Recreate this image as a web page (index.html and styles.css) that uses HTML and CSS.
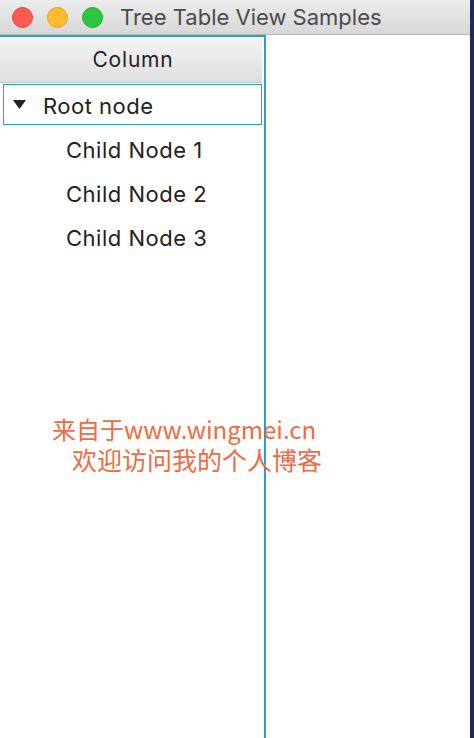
FILE: index.html
```html
<!DOCTYPE html>
<html lang="zh">
<head>
<meta charset="utf-8">
<title>Tree Table View Samples</title>
<link rel="stylesheet" href="styles.css">
</head>
<body>
<div class="window">
  <div class="titlebar">
    <div class="lights">
      <span class="light red"></span>
      <span class="light yellow"></span>
      <span class="light green"></span>
    </div>
    <div class="title">Tree Table View Samples</div>
  </div>
  <div class="content">
    <div class="table">
      <div class="header">Column</div>
      <div class="row root">
        <div class="focus">
          <svg class="arrow" width="13" height="9" viewBox="0 0 13 9"><polygon points="0,0 13,0 6.5,9" fill="#222"/></svg>
          <span class="label">Root node</span>
        </div>
      </div>
      <div class="row child"><span class="label">Child Node 1</span></div>
      <div class="row child"><span class="label">Child Node 2</span></div>
      <div class="row child"><span class="label">Child Node 3</span></div>
    </div>
    <div class="blank"></div>
  </div>
  <div class="watermark">
    <div class="wm1">来自于www.wingmei.cn</div>
    <div class="wm2">欢迎访问我的个人博客</div>
  </div>
</div>
</body>
</html>
```

FILE: styles.css
```css
html, body {
  margin: 0;
  padding: 0;
  height: 100%;
}
body {
  background: #1d2c54;
  font-family: Inter, "Noto Sans", sans-serif;
  overflow: hidden;
}
.window {
  position: relative;
  width: 470px;
  height: 738px;
  background: #ffffff;
  display: flex;
  flex-direction: column;
}
.titlebar {
  flex: none;
  display: flex;
  align-items: center;
  background: linear-gradient(#ececec, #d7d7d7);
  border-bottom: 1px solid #b8b8b8;
  box-sizing: border-box;
  height: 35px;
  padding-left: 12px;
}
.lights {
  display: flex;
  gap: 14px;
}
.light {
  width: 21px;
  height: 21px;
  border-radius: 50%;
  box-sizing: border-box;
}
.red { background: #fd5a56; border: 1px solid #e2463f; }
.yellow { background: #febb2e; border: 1px solid #e0a027; }
.green { background: #2ac83f; border: 1px solid #1ead2d; }
.title {
  margin-left: 17px;
  font-size: 22px;
  color: #4b4b4b;
}
.content {
  flex: 1;
  display: flex;
}
.table {
  width: 264px;
  border-top: 2px solid #2aa0d2;
  border-right: 2px solid #2aa0d2;
  display: flex;
  flex-direction: column;
}
.header {
  width: 262px;
  height: 46px;
  box-sizing: border-box;
  background: linear-gradient(#f4f4f4, #dfdfdf);
  border-bottom: 1px solid #c9c9c9;
  display: flex;
  align-items: center;
  justify-content: center;
  font-size: 21px;
  letter-spacing: 0.8px;
  color: #222;
  padding-bottom: 1px;
  padding-left: 4px;
}
.row {
  height: 44px;
  display: flex;
  align-items: center;
  font-size: 22px;
  letter-spacing: 0.5px;
  color: #222;
}
.row.root {
  height: 45px;
  align-items: flex-start;
}
.focus {
  margin: 1px 0 0 3px;
  width: 259px;
  height: 41px;
  box-sizing: border-box;
  border: 1.5px solid #2aa0d2;
  display: flex;
  align-items: center;
  padding-left: 9px;
  padding-top: 2px;
}
.arrow {
  flex: none;
  margin-bottom: 3px;
}
.focus .label {
  margin-left: 17px;
}
.child .label {
  margin-left: 66px;
}
.blank {
  flex: 1;
}
.watermark {
  position: absolute;
  left: 52px;
  top: 413px;
  font-family: "Noto Sans CJK SC", sans-serif;
  font-size: 24px;
  line-height: 31px;
  color: #ef6a45;
}
.wm2 {
  padding-left: 20px;
  font-size: 25px;
}
```
